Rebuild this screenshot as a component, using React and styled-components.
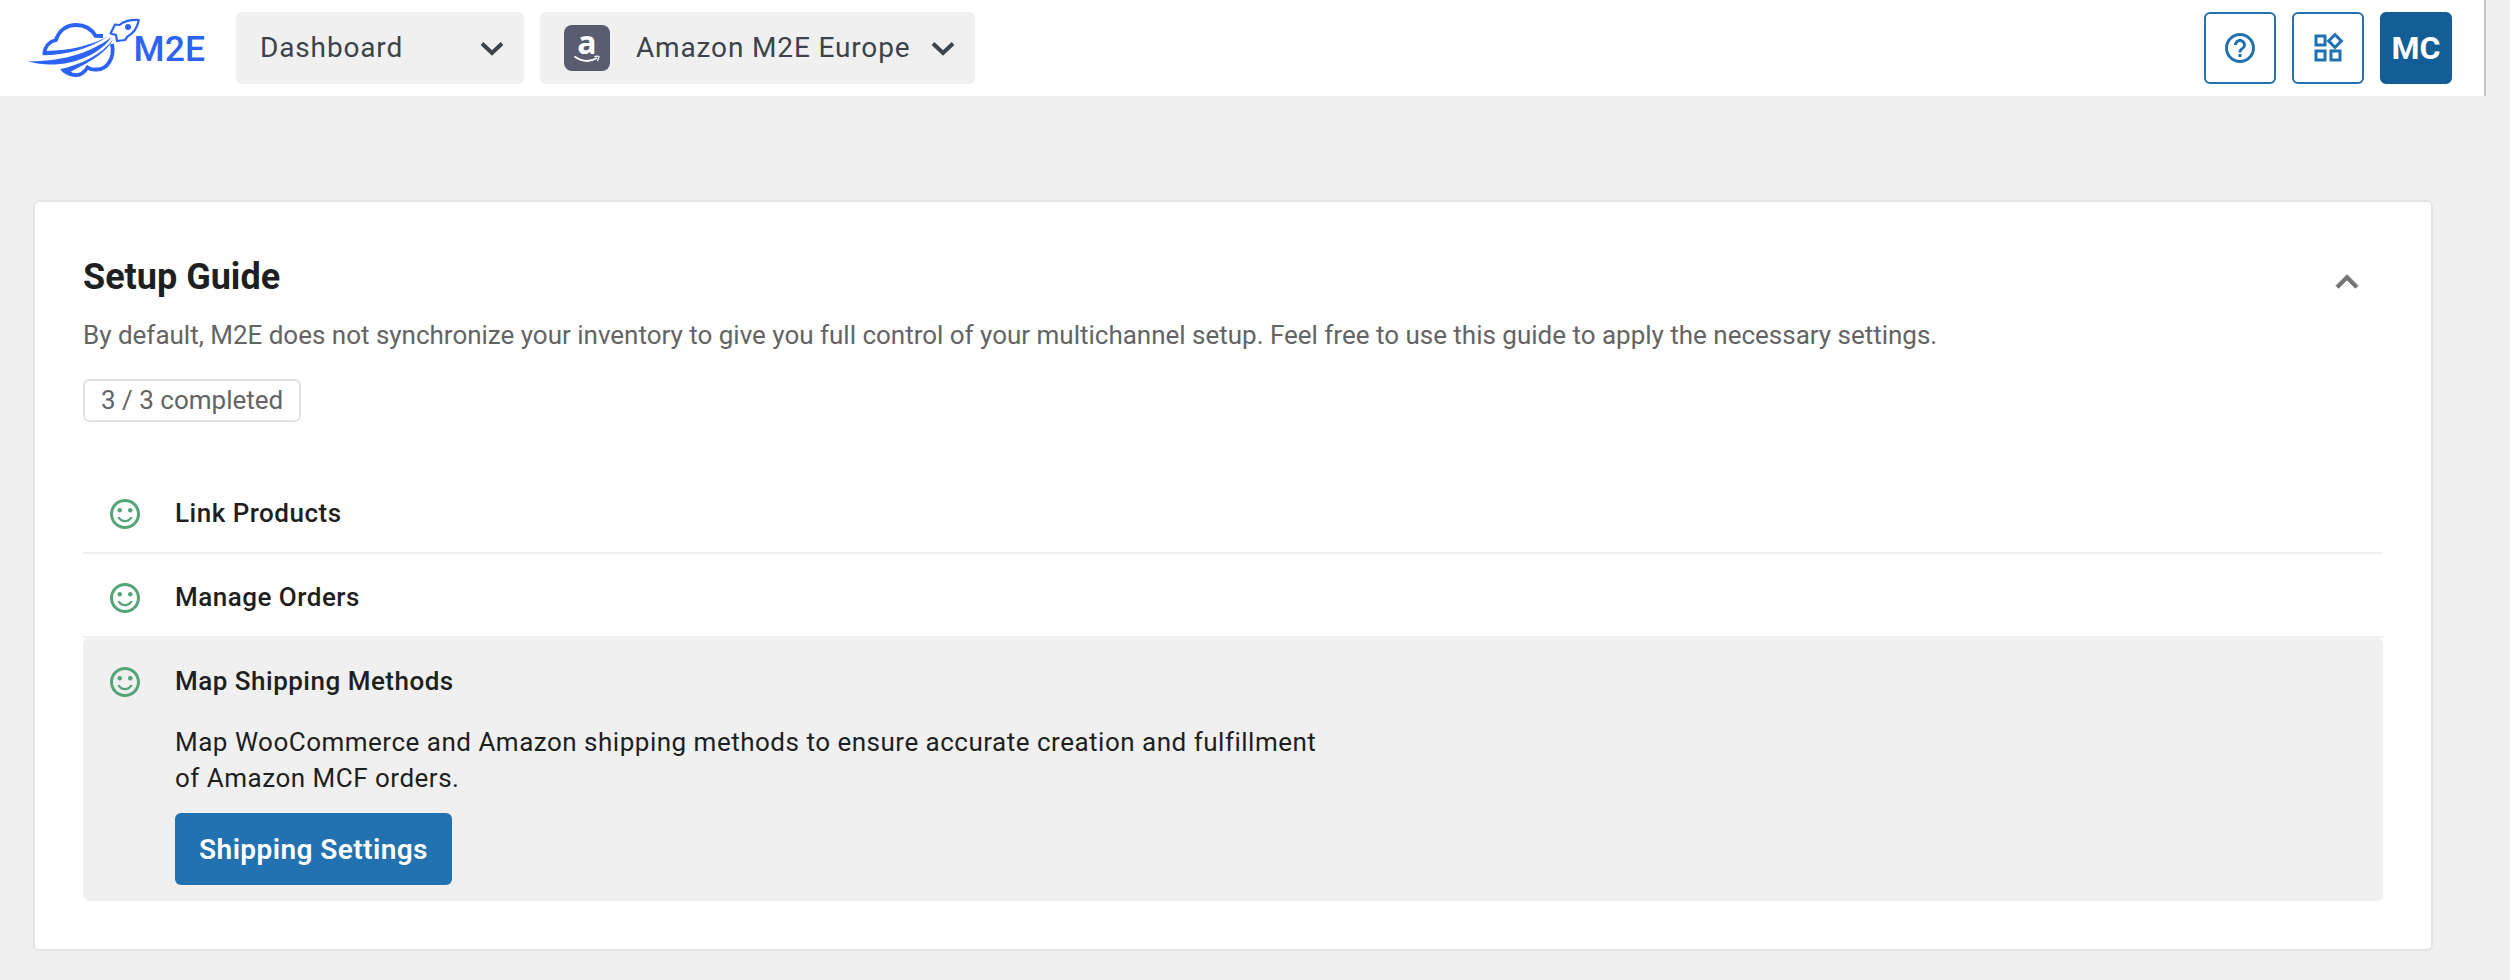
import React from "react";
import styled, { createGlobalStyle } from "styled-components";

const Global = createGlobalStyle`
  * { box-sizing: border-box; }
  body { margin: 0; background: #f0f0f1; font-family: Roboto, sans-serif; color: #1d1f20; }
  h1, h2, p, ul { margin: 0; padding: 0; }
  button { font-family: inherit; margin: 0; }
`;

const Page = styled.div`
  width: 2510px;
  height: 980px;
  overflow: hidden;
`;

const TopBar = styled.header`
  width: 2486px;
  height: 96px;
  padding: 12px 32px 12px 28px;
  display: flex;
  align-items: center;
  background: #fff;
  border-right: 2px solid #c3c4c7;
`;

const Brand = styled.div`
  display: flex;
  width: 208px;
  height: 72px;
`;

const Select = styled.button`
  display: flex;
  align-items: center;
  width: ${(p) => p.$width}px;
  height: 72px;
  margin-right: 16px;
  padding: 0 20px 0 24px;
  border: 0;
  border-radius: 6px;
  background: #f0f0f1;
  color: #3c434a;
`;

const SelectLabel = styled.span`
  flex: 1;
  text-align: left;
  font-size: 28px;
  line-height: 36px;
  letter-spacing: 0.85px;
  white-space: nowrap;
`;

const ChannelBadge = styled.span`
  display: flex;
  width: 46px;
  height: 46px;
  margin-right: 26px;
`;

const Actions = styled.div`
  display: flex;
  gap: 16px;
  margin-left: auto;
`;

const IconButton = styled.button`
  display: flex;
  align-items: center;
  justify-content: center;
  width: 72px;
  height: 72px;
  padding: 0;
  border: 2px solid ${(p) => (p.$filled ? "#135e96" : "#2271b1")};
  border-radius: 6px;
  background: ${(p) => (p.$filled ? "#135e96" : "#fff")};
  color: ${(p) => (p.$filled ? "#fff" : "#2271b1")};
  font-size: 32px;
  font-weight: 700;
`;

const Card = styled.section`
  width: 2400px;
  margin: 104px 0 0 33px;
  padding: 48px;
  border: 2px solid #e4e5e7;
  border-radius: 6px;
  background: #fff;
`;

const CardHead = styled.div`
  display: flex;
  justify-content: space-between;
  height: 220px;
`;

const Title = styled.h1`
  margin-top: 5px;
  font-size: 36px;
  line-height: 44px;
  font-weight: 700;
`;

const Subtitle = styled.p`
  margin-top: 18px;
  font-size: 26px;
  line-height: 36px;
  letter-spacing: -0.01px;
  color: #646464;
`;

const Progress = styled.div`
  display: inline-flex;
  align-items: center;
  height: 43px;
  margin-top: 26px;
  padding: 0 16px 2px;
  border: 2px solid #e2e3e5;
  border-radius: 6px;
  font-size: 26px;
  line-height: 36px;
  color: #646464;
`;

const Collapse = styled.span`
  display: flex;
  margin: 10px 14px 0 0;
`;

const Step = styled.li`
  display: flex;
  gap: 32px;
  height: ${(p) => (p.$open ? 263 : 84)}px;
  padding: 26px 24px 0;
  border-bottom: ${(p) => (p.$open ? "0" : "2px solid #f0f0f1")};
  border-radius: ${(p) => (p.$open ? "6px" : "0")};
  background: ${(p) => (p.$open ? "#f0f0f1" : "#fff")};
`;

const StepBody = styled.div`
  width: 1160px;
`;

const StepTitle = styled.h2`
  margin-top: -1px;
  font-size: 26px;
  line-height: 36px;
  font-weight: 500;
  letter-spacing: 0.5px;
`;

const StepText = styled.p`
  margin-top: 25px;
  font-size: 26px;
  line-height: 36px;
  letter-spacing: 0.5px;
`;

const PrimaryButton = styled.button`
  height: 72px;
  width: 277px;
  margin-top: 17px;
  padding: 0;
  border: 0;
  border-radius: 6px;
  background: #2271b1;
  color: #fff;
  font-size: 28px;
  font-weight: 600;
  letter-spacing: 0.43px;
`;

const Logo = () => (
  <svg width="180" height="72" viewBox="28 12 180 72" fill="none" stroke="#2c63f6" overflow="visible">
    <path d="M44 54 C45 46 49 41.500 56 40 C59 30 67 25 76 25 C85 25 91.500 29 95.500 35.800 L103 36" strokeWidth="3.800" />
    <path d="M112 44 C115 58 107 70 96 69.500 Q91 70 87.500 67.500 C84 73 80 75.500 75 75 C70 74.800 67 73 63 70" strokeWidth="3.800" />
    <path d="M42.300 55.300 C66 55 90 49 108 36.200 C92 45 72 50.300 45.500 51 Z M28 61.300 C58 61.500 88 55 111.500 37 C98 58 60 71 28 61.300 Z M60 69.300 C82 64 101 55 113 39.500 C107 52 92 61 71 71.500 L74 75 Q66 76 60 69.300 Z" fill="#2c63f6" stroke="none" />
    <path d="M110.500 33.500 L115 24.500 L119.500 25 C125 20 132 19.800 138.800 20 C137.500 27 134 33 127.500 36.500 L125 40 L117 41 L116 35 Z" strokeWidth="2.200" strokeLinejoin="round" fill="#fff" />
    <circle cx="128" cy="27" r="3" fill="#2c63f6" stroke="none" />
    <text x="133.500" y="61" fontFamily="Roboto, sans-serif" fontSize="35.500" fontWeight="500" fill="#2c63f6" stroke="none" textLength="71.500">M2E</text>
  </svg>
);

const Chevron = ({ up }) =>
  up ? (
    <svg width="44" height="44" viewBox="0 0 24 24">
      <path d="M12 8l-6 6 1.410 1.410L12 10.830l4.590 4.580L18 14z" fill="#757575" stroke="#757575" strokeWidth="0.500" />
    </svg>
  ) : (
    <svg width="24" height="24" viewBox="0 0 24 24">
      <path d="M2 7.500 L12 17 L22 7.500" fill="none" stroke="#3c434a" strokeWidth="4" />
    </svg>
  );

const Amazon = () => (
  <svg width="46" height="46" viewBox="0 0 46 46" overflow="visible">
    <rect width="46" height="46" rx="8" fill="#5a5c70" />
    <text x="23" y="29" textAnchor="middle" fontFamily="Open Sans, sans-serif" fontSize="32" fontWeight="700" fill="#fff">a</text>
    <path d="M10.500 31.500 Q22 39.500 33 33" fill="none" stroke="#fff" strokeWidth="1.900" />
    <path d="M30.500 31.600 Q36 30.500 34.800 32.500 L33.500 36" fill="none" stroke="#fff" strokeWidth="1.200" />
  </svg>
);

const HelpIcon = () => (
  <svg width="36" height="36" viewBox="0 0 24 24" fill="currentColor">
    <path d="M11 18h2v-2h-2v2zm1-16C6.480 2 2 6.480 2 12s4.480 10 10 10 10-4.480 10-10S17.520 2 12 2zm0 18c-4.410 0-8-3.590-8-8s3.590-8 8-8 8 3.590 8 8-3.590 8-8 8zm0-14c-2.210 0-4 1.790-4 4h2c0-1.100.9-2 2-2s2 .9 2 2c0 2-3 1.750-3 5h2c0-2.250 3-2.500 3-5 0-2.210-1.790-4-4-4z" />
  </svg>
);

const WidgetsIcon = () => (
  <svg width="36" height="36" viewBox="0 0 24 24" fill="currentColor">
    <path d="M16.660 4.520l2.830 2.830-2.830 2.830-2.830-2.830 2.830-2.830M9 5v4H5V5h4m10 10v4h-4v-4h4M9 15v4H5v-4h4m7.660-13.310L11 7.340 16.660 13l5.660-5.660-5.660-5.650zM11 3H3v8h8V3zm10 10h-8v8h8v-8zm-10 0H3v8h8v-8z" />
  </svg>
);

const Smile = () => (
  <svg width="36" height="36" viewBox="0 0 24 24" fill="#55a477">
    <circle cx="15.500" cy="9.500" r="1.500" />
    <circle cx="8.500" cy="9.500" r="1.500" />
    <path d="M11.990 2C6.470 2 2 6.480 2 12s4.470 10 9.990 10C17.520 22 22 17.520 22 12S17.520 2 11.990 2zM12 20c-4.420 0-8-3.580-8-8s3.580-8 8-8 8 3.580 8 8-3.580 8-8 8zm0-4c-1.480 0-2.750-.81-3.450-2H6.880c.8 2.050 2.790 3.500 5.120 3.500s4.320-1.450 5.120-3.500h-1.670c-.7 1.190-1.970 2-3.450 2z" />
  </svg>
);

export default function App() {
  return (
    <Page>
      <Global />
      <TopBar>
        <Brand><Logo /></Brand>
        <Select $width={288}>
          <SelectLabel>Dashboard</SelectLabel>
          <Chevron />
        </Select>
        <Select $width={435}>
          <ChannelBadge><Amazon /></ChannelBadge>
          <SelectLabel>Amazon M2E Europe</SelectLabel>
          <Chevron />
        </Select>
        <Actions>
          <IconButton><HelpIcon /></IconButton>
          <IconButton><WidgetsIcon /></IconButton>
          <IconButton $filled>MC</IconButton>
        </Actions>
      </TopBar>
      <Card>
        <CardHead>
          <div>
            <Title>Setup Guide</Title>
            <Subtitle>
              By default, M2E does not synchronize your inventory to give you full control of your
              multichannel setup. Feel free to use this guide to apply the necessary settings.
            </Subtitle>
            <Progress>3 / 3 completed</Progress>
          </div>
          <Collapse><Chevron up /></Collapse>
        </CardHead>
        <ul>
          <Step><Smile /><StepTitle>Link Products</StepTitle></Step>
          <Step><Smile /><StepTitle>Manage Orders</StepTitle></Step>
          <Step $open>
            <Smile />
            <StepBody>
              <StepTitle>Map Shipping Methods</StepTitle>
              <StepText>
                Map WooCommerce and Amazon shipping methods to ensure accurate creation and
                fulfillment of Amazon MCF orders.
              </StepText>
              <PrimaryButton>Shipping Settings</PrimaryButton>
            </StepBody>
          </Step>
        </ul>
      </Card>
    </Page>
  );
}
